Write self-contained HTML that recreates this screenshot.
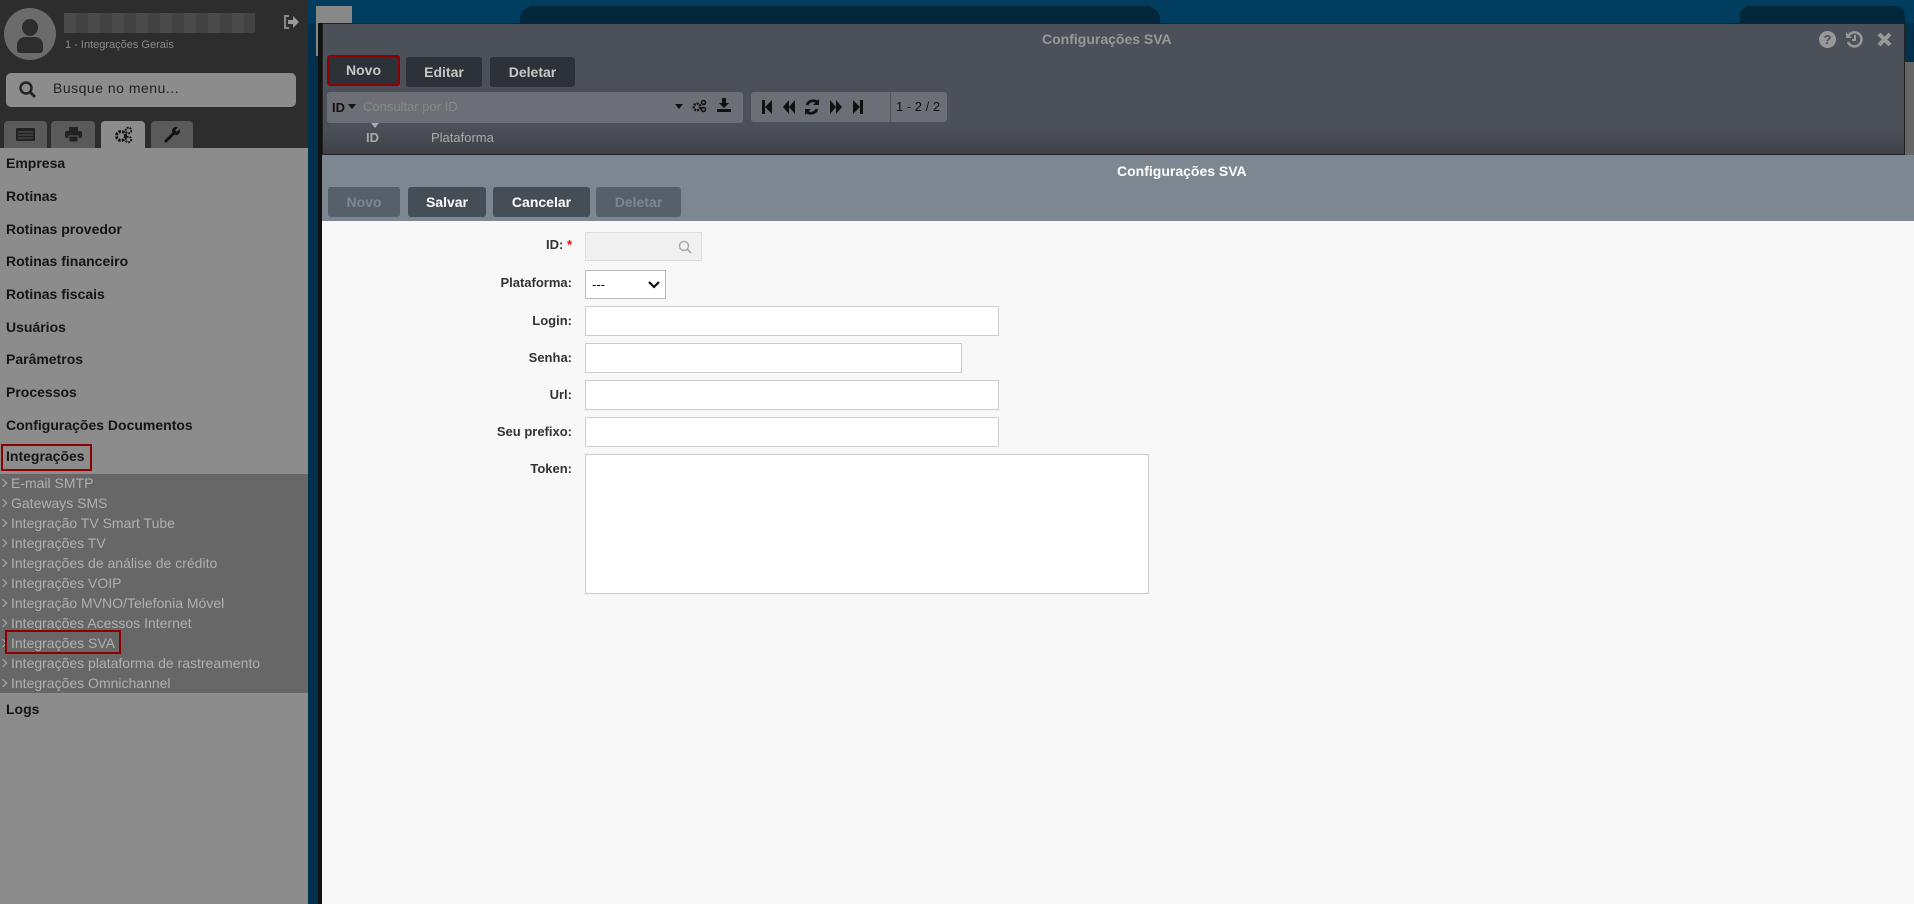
<!DOCTYPE html>
<html><head><meta charset="utf-8"><style>
*{box-sizing:border-box;margin:0;padding:0}
body{width:1914px;height:904px;overflow:hidden;position:relative;background:#00304c;font-family:"Liberation Sans",sans-serif}
.abs{position:absolute}
#sb{left:0;top:0;width:308px;height:904px;background:#8c8c8c}
#sbh{left:0;top:0;width:308px;height:148px;background:#2d2d2d}
.mi{position:absolute;left:6px;font-size:14px;font-weight:bold;color:#151515}
.si{position:absolute;left:11px;font-size:14px;color:#b0b0b0;white-space:nowrap}
.si:before{content:"";position:absolute;left:-11px;top:5px;width:5px;height:5px;border-right:1.5px solid #aaa;border-top:1.5px solid #aaa;transform:rotate(45deg)}
.tab{position:absolute;top:121px;height:27px;background:#5a5a5a;border-radius:4px 4px 0 0}
.btn{position:absolute;height:30px;border-radius:3px;font-size:14px;font-weight:bold;color:#c8c8c8;background:#2d3238;text-align:center;line-height:30px}
.b2{background:#454d57;color:#fff}
.b2d{background:#56606b;color:#7d8692}
.lbl{position:absolute;right:1342px;font-size:13px;font-weight:bold;color:#333;text-align:right;white-space:nowrap}
.inp{position:absolute;left:585px;background:#fff;border:1px solid #ccc}
</style></head><body>
<div class="abs" style="left:308px;top:0;width:1606px;height:23px;background:#003d5e"></div>
<div class="abs" style="left:520px;top:6px;width:640px;height:20px;background:#02263a;border-radius:14px 14px 0 0"></div>
<div class="abs" style="left:1740px;top:6px;width:165px;height:20px;background:#02263a;border-radius:10px 10px 0 0"></div>
<div class="abs" style="left:316px;top:6px;width:36px;height:50px;background:#888"></div>
<div class="abs" style="left:318px;top:23px;width:4px;height:881px;background:#111"></div>
<!-- sidebar -->
<div id="sb" class="abs"></div>
<div id="sbh" class="abs"></div>
<div class="abs" style="left:4px;top:8px;width:52px;height:52px;border-radius:50%;background:#6b6b6b;overflow:hidden">
<div class="abs" style="left:18px;top:11px;width:16px;height:17px;border-radius:50%;background:#2d2d2d"></div>
<div class="abs" style="left:13px;top:29px;width:26px;height:16px;border-radius:8px 8px 3px 3px;background:#2d2d2d"></div></div>
<div class="abs" style="left:64px;top:13px;width:191px;height:20px;background:repeating-linear-gradient(90deg,#4a4a4a 0 12px,#434343 12px 24px)"></div>
<div class="abs" style="left:65px;top:39px;font-size:11px;color:#8a8a8a">1 - Integrações Gerais</div>
<svg class="abs" style="left:283px;top:15px" width="16" height="14"><path d="M6 1H2v12h4" stroke="#888" stroke-width="2" fill="none"/><path d="M5 5h5V1l6 6-6 6V9H5z" fill="#999"/></svg>
<div class="abs" style="left:6px;top:73px;width:290px;height:34px;background:#8c8c8c;border-radius:5px"></div>
<svg class="abs" style="left:19px;top:81px" width="18" height="18"><circle cx="7" cy="7" r="5.5" stroke="#222" stroke-width="2.4" fill="none"/><line x1="11" y1="11" x2="16" y2="16" stroke="#222" stroke-width="2.8"/></svg>
<div class="abs" style="left:53px;top:80px;font-size:14px;color:#222;letter-spacing:.5px">Busque no menu...</div>
<div class="tab" style="left:4px;width:43px"><svg class="abs" style="left:12px;top:7px" width="19" height="13"><rect x="0" y="0" width="19" height="13" rx="1" fill="#222"/><path d="M2 4h15M2 7h15M2 10h15" stroke="#555" stroke-width="1"/></svg></div>
<div class="tab" style="left:51px;width:44px"><svg class="abs" style="left:14px;top:6px" width="17" height="15"><rect x="4" y="0" width="9" height="4" fill="#222"/><rect x="0" y="4" width="17" height="7" rx="2" fill="#222"/><rect x="4" y="9" width="9" height="6" fill="#222" stroke="#5a5a5a" stroke-width="1"/></svg></div>
<div class="tab" style="left:101px;width:44px;background:#8c8c8c"><svg class="abs" style="left:13px;top:5px" width="19" height="18"><circle cx="7" cy="10" r="4.5" stroke="#111" stroke-width="3" fill="none" stroke-dasharray="2.5 1.2"/><circle cx="14.5" cy="4.5" r="2.8" stroke="#111" stroke-width="2" fill="none" stroke-dasharray="1.8 1"/><circle cx="14.5" cy="13.5" r="2.8" stroke="#111" stroke-width="2" fill="none" stroke-dasharray="1.8 1"/></svg></div>
<div class="tab" style="left:151px;width:42px"><svg class="abs" style="left:13px;top:5px" width="17" height="17"><path d="M2 15L9 8" stroke="#111" stroke-width="3" stroke-linecap="round"/><circle cx="12" cy="5" r="4" fill="#111"/><path d="M12 5l4-4" stroke="#5a5a5a" stroke-width="2.5"/></svg></div>
<div class="mi" style="top:155px">Empresa</div>
<div class="mi" style="top:188px">Rotinas</div>
<div class="mi" style="top:221px">Rotinas provedor</div>
<div class="mi" style="top:253px">Rotinas financeiro</div>
<div class="mi" style="top:286px">Rotinas fiscais</div>
<div class="mi" style="top:319px">Usuários</div>
<div class="mi" style="top:351px">Parâmetros</div>
<div class="mi" style="top:384px">Processos</div>
<div class="mi" style="top:417px">Configurações Documentos</div>
<div class="mi" style="top:448px">Integrações</div>
<div class="abs" style="left:1px;top:444px;width:91px;height:27px;border:2px solid #8b0000"></div>
<div class="abs" style="left:0;top:474px;width:308px;height:219px;background:#676767"></div>
<div class="si" style="top:475px">E-mail SMTP</div>
<div class="si" style="top:495px">Gateways SMS</div>
<div class="si" style="top:515px">Integração TV Smart Tube</div>
<div class="si" style="top:535px">Integrações TV</div>
<div class="si" style="top:555px">Integrações de análise de crédito</div>
<div class="si" style="top:575px">Integrações VOIP</div>
<div class="si" style="top:595px">Integração MVNO/Telefonia Móvel</div>
<div class="si" style="top:615px">Integrações Acessos Internet</div>
<div class="si" style="top:635px">Integrações SVA</div>
<div class="abs" style="left:5px;top:630px;width:116px;height:24px;border:2px solid #8b0000"></div>
<div class="si" style="top:655px">Integrações plataforma de rastreamento</div>
<div class="si" style="top:675px">Integrações Omnichannel</div>
<div class="mi" style="top:701px">Logs</div>
<!-- top modal -->
<div class="abs" style="left:322px;top:23px;width:1583px;height:132px;background:linear-gradient(#4c5058 0,#4c5058 80%,#3e4147 100%);border:1px solid #222"></div>
<div class="abs" style="left:1905px;top:62px;width:9px;height:93px;background:#666"></div>
<div class="abs" style="left:1042px;top:31px;font-size:14px;font-weight:bold;color:#999">Configurações SVA</div>
<div class="abs" style="left:1819px;top:31px;width:17px;height:17px;border-radius:50%;background:#999;color:#4c5058;font-size:13px;font-weight:bold;text-align:center;line-height:17px">?</div>
<svg class="abs" style="left:1845px;top:30px" width="19" height="19"><path d="M4 5A7 7 0 1 1 3 12" stroke="#999" stroke-width="2.5" fill="none"/><path d="M1 2v6h6z" fill="#999"/><path d="M10 5v5h-3" stroke="#999" stroke-width="2" fill="none"/></svg>
<svg class="abs" style="left:1877px;top:32px" width="15" height="15"><path d="M2 2L13 13M13 2L2 13" stroke="#999" stroke-width="4"/></svg>
<div class="btn" style="left:327px;top:55px;width:73px;height:31px;border:2px solid #8b0000;line-height:27px">Novo</div>
<div class="btn" style="left:406px;top:57px;width:76px">Editar</div>
<div class="btn" style="left:490px;top:57px;width:85px">Deletar</div>
<div class="abs" style="left:327px;top:92px;width:416px;height:31px;background:#6c6f75;border-radius:3px"></div>
<div class="abs" style="left:332px;top:100px;font-size:13px;font-weight:bold;color:#111">ID</div>
<svg class="abs" style="left:348px;top:104px" width="8" height="5"><path d="M0 0h8L4 5z" fill="#111"/></svg>
<div class="abs" style="left:363px;top:99px;font-size:13px;color:#888">Consultar por ID</div>
<svg class="abs" style="left:675px;top:104px" width="8" height="5"><path d="M0 0h8L4 5z" fill="#111"/></svg>
<svg class="abs" style="left:692px;top:99px" width="15" height="14"><circle cx="5" cy="8" r="3.3" stroke="#111" stroke-width="2.4" fill="none" stroke-dasharray="2 1"/><circle cx="11.5" cy="3.5" r="2" stroke="#111" stroke-width="1.6" fill="none"/><circle cx="11.5" cy="10.5" r="2" stroke="#111" stroke-width="1.6" fill="none"/></svg>
<svg class="abs" style="left:717px;top:98px" width="14" height="14"><path d="M5 0h4v5h3L7 10 2 5h3z" fill="#111"/><path d="M0 11h14v3H0z" fill="#111"/></svg>
<div class="abs" style="left:751px;top:92px;width:196px;height:30px;background:#6c6f75;border-radius:3px"></div>
<div class="abs" style="left:890px;top:92px;width:1px;height:30px;background:#555"></div>
<svg class="abs" style="left:760px;top:98px" width="125" height="18">
<path d="M2 2h3v14H2zM5 9l7-7v14z" fill="#111"/>
<path d="M23 9l6-7v14zM29 9l6-7v14z" fill="#111"/>
<path d="M58 5A6.5 6.5 0 0 0 47 7M46 13A6.5 6.5 0 0 0 57 11" stroke="#111" stroke-width="2.8" fill="none"/><path d="M59 1v6h-6zM45 17v-6h6z" fill="#111"/>
<path d="M70 2l6 7-6 7zM76 2l6 7-6 7z" fill="#111"/>
<path d="M93 2l7 7-7 7zM100 2h3v14h-3z" fill="#111"/>
</svg>
<div class="abs" style="left:896px;top:99px;font-size:13px;color:#111">1 - 2 / 2</div>
<svg class="abs" style="left:371px;top:123px" width="8" height="5"><path d="M0 0h8L4 5z" fill="#aaa"/></svg>
<div class="abs" style="left:366px;top:130px;font-size:13px;font-weight:bold;color:#aaa">ID</div>
<div class="abs" style="left:431px;top:130px;font-size:13px;color:#aaa">Plataforma</div>
<!-- bottom modal -->
<div class="abs" style="left:322px;top:155px;width:1592px;height:66px;background:#7d8792"></div>
<div class="abs" style="left:1117px;top:163px;font-size:14px;font-weight:bold;color:#fff">Configurações SVA</div>
<div class="btn b2d" style="left:328px;top:187px;width:72px">Novo</div>
<div class="btn b2" style="left:408px;top:187px;width:78px">Salvar</div>
<div class="btn b2" style="left:493px;top:187px;width:97px">Cancelar</div>
<div class="btn b2d" style="left:596px;top:187px;width:85px">Deletar</div>
<div class="abs" style="left:322px;top:221px;width:1592px;height:683px;background:#f8f8f8"></div>
<div class="lbl" style="top:237px">ID: <span style="color:red">*</span></div>
<div class="inp" style="top:232px;width:117px;height:29px;background:#f0f0f0;border-color:#ddd"></div>
<svg class="abs" style="left:678px;top:240px" width="14" height="14"><circle cx="6" cy="6" r="4.5" stroke="#aaa" stroke-width="1.5" fill="none"/><line x1="9" y1="9" x2="13" y2="13" stroke="#aaa" stroke-width="1.6"/></svg>
<div class="lbl" style="top:275px">Plataforma:</div>
<div class="inp" style="top:270px;width:81px;height:29px;border-color:#bbb;font-size:13px;padding:6px 6px">---</div>
<svg class="abs" style="left:648px;top:281px" width="12" height="8"><path d="M1 1l5 5 5-5" stroke="#111" stroke-width="2.2" fill="none"/></svg>
<div class="lbl" style="top:313px">Login:</div>
<div class="inp" style="top:306px;width:414px;height:30px"></div>
<div class="lbl" style="top:350px">Senha:</div>
<div class="inp" style="top:343px;width:377px;height:30px"></div>
<div class="lbl" style="top:387px">Url:</div>
<div class="inp" style="top:380px;width:414px;height:30px"></div>
<div class="lbl" style="top:424px">Seu prefixo:</div>
<div class="inp" style="top:417px;width:414px;height:30px"></div>
<div class="lbl" style="top:461px">Token:</div>
<div class="inp" style="top:454px;width:564px;height:140px"></div>
</body></html>
